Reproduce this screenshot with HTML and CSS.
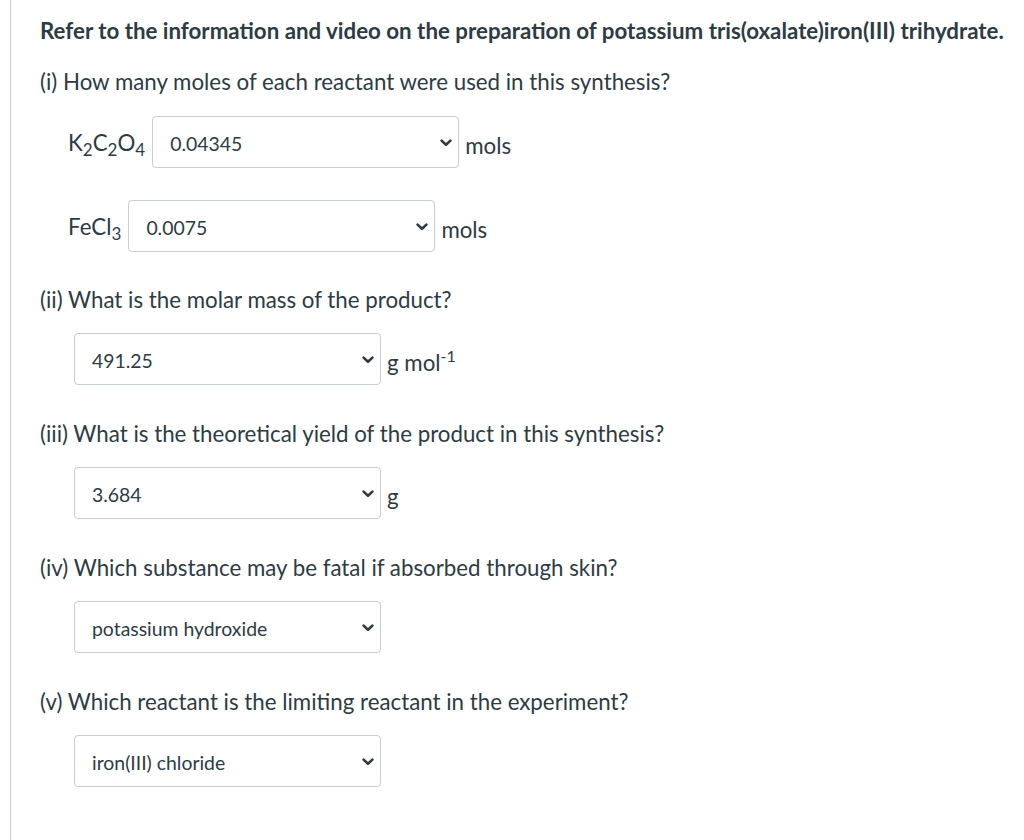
FILE: index.html
```html
<!DOCTYPE html>
<html lang="en">
<head>
<meta charset="utf-8">
<title>Quiz question</title>
<link rel="stylesheet" href="styles.css">
</head>
<body>
<div class="page">
  <p class="title">Refer to the information and video on the preparation of potassium tris(oxalate)iron(III) trihydrate.</p>

  <p class="q q-first">(i) How many moles of each reactant were used in this synthesis?</p>
  <div class="row row-first">
    <span class="label">K<sub>2</sub>C<sub>2</sub>O<sub>4</sub></span>
    <div class="select"><span class="val">0.04345</span><svg class="chev" width="12" height="8" viewBox="0 0 12 8"><path d="M1.6 1.6 L6 5.8 L10.4 1.6" fill="none" stroke="#2d3b45" stroke-width="2.6" stroke-linecap="round" stroke-linejoin="round"/></svg></div>
    <span class="unit">mols</span>
  </div>
  <div class="row row-second">
    <span class="label">FeCl<sub>3</sub></span>
    <div class="select"><span class="val">0.0075</span><svg class="chev" width="12" height="8" viewBox="0 0 12 8"><path d="M1.6 1.6 L6 5.8 L10.4 1.6" fill="none" stroke="#2d3b45" stroke-width="2.6" stroke-linecap="round" stroke-linejoin="round"/></svg></div>
    <span class="unit">mols</span>
  </div>

  <p class="q">(ii) What is the molar mass of the product?</p>
  <div class="row row-indent">
    <div class="select"><span class="val">491.25</span><svg class="chev" width="12" height="8" viewBox="0 0 12 8"><path d="M1.6 1.6 L6 5.8 L10.4 1.6" fill="none" stroke="#2d3b45" stroke-width="2.6" stroke-linecap="round" stroke-linejoin="round"/></svg></div>
    <span class="unit">g mol<sup>-1</sup></span>
  </div>

  <p class="q">(iii) What is the theoretical yield of the product in this synthesis?</p>
  <div class="row row-indent">
    <div class="select"><span class="val">3.684</span><svg class="chev" width="12" height="8" viewBox="0 0 12 8"><path d="M1.6 1.6 L6 5.8 L10.4 1.6" fill="none" stroke="#2d3b45" stroke-width="2.6" stroke-linecap="round" stroke-linejoin="round"/></svg></div>
    <span class="unit">g</span>
  </div>

  <p class="q">(iv) Which substance may be fatal if absorbed through skin?</p>
  <div class="row row-indent">
    <div class="select"><span class="val">potassium hydroxide</span><svg class="chev" width="12" height="8" viewBox="0 0 12 8"><path d="M1.6 1.6 L6 5.8 L10.4 1.6" fill="none" stroke="#2d3b45" stroke-width="2.6" stroke-linecap="round" stroke-linejoin="round"/></svg></div>
  </div>

  <p class="q">(v) Which reactant is the limiting reactant in the experiment?</p>
  <div class="row row-indent">
    <div class="select"><span class="val">iron(III) chloride</span><svg class="chev" width="12" height="8" viewBox="0 0 12 8"><path d="M1.6 1.6 L6 5.8 L10.4 1.6" fill="none" stroke="#2d3b45" stroke-width="2.6" stroke-linecap="round" stroke-linejoin="round"/></svg></div>
  </div>
</div>
</body>
</html>
```

FILE: styles.css
```css
html, body {
  margin: 0;
  padding: 0;
  background: #ffffff;
}

body {
  font-family: Lato, "Noto Sans", "Liberation Sans", sans-serif;
  color: #2d3b45;
}

.page {
  margin-left: 10px;
  border-left: 1px solid #c7cdd1;
  min-height: 840px;
  box-sizing: border-box;
  padding: 15px 0 0 29px;
}

.title {
  margin: 0;
  padding-top: 2px;
  font-size: 22.3px;
  line-height: 28px;
  font-weight: 700;
}

.q {
  margin: 33px 0 19px 0;
  padding-top: 2px;
  font-size: 22.3px;
  line-height: 28px;
}

.q-first {
  margin-top: 21px;
  margin-bottom: 20px;
}

.row {
  display: flex;
  align-items: center;
  height: 52px;
}

.row-first {
  padding-left: 28px;
}

.row-second {
  padding-left: 28px;
  margin-top: 32px;
}

.row-second + .q {
  margin-top: 32px;
}

.row-indent {
  padding-left: 34px;
}

.label {
  font-size: 22.3px;
  margin-right: 7px;
}

.label sub {
  font-size: 17px;
  vertical-align: -5px;
  line-height: 0;
}

.select {
  width: 307px;
  height: 52px;
  box-sizing: border-box;
  border: 1px solid #c7cdd1;
  border-radius: 4px;
  display: flex;
  align-items: center;
  justify-content: space-between;
  padding: 2px 6px 0 17px;
  background: #fff;
}

.val {
  font-size: 19.4px;
}

.chev {
  display: block;
}

.unit {
  font-size: 22.3px;
  margin-left: 6px;
  padding-top: 6px;
}

.unit sup {
  font-size: 16px;
  vertical-align: 9px;
  line-height: 0;
}
```
